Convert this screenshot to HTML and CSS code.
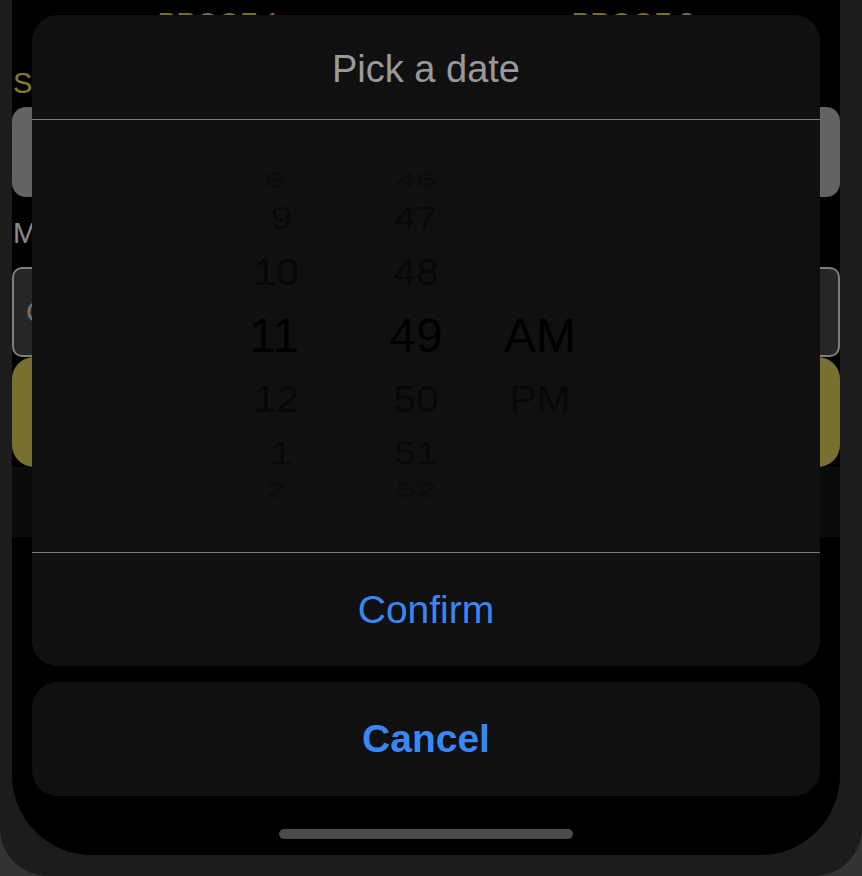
FILE: index.html
```html
<!DOCTYPE html>
<html>
<head>
    <title>Pick a date</title>
    <link rel="stylesheet" href="styles.css">
</head>
<body>
    <div class="device">
        <div class="screen">
            <!-- form behind the modal -->
            <div class="app">
                <div class="app-tabs">
                    <span class="app-tab">PROOF 1</span>
                    <span class="app-tab">PROOF 2</span>
                </div>
                <div class="app-label gold">Select date</div>
                <div class="app-btn"></div>
                <div class="app-label">Manufacturer</div>
                <div class="app-input">Choose one</div>
                <div class="app-submit"></div>
                <div class="app-footer"></div>
            </div>
            <div class="backdrop"></div>

            <div class="sheet">
                <div class="sheet-card">
                    <div class="sheet-title">Pick a date</div>
                    <div class="picker">
                        <div class="picker-band"></div>
                        <div class="picker-row r4"><span>7</span><span>45</span><span></span></div>
                        <div class="picker-row r3"><span>8</span><span>46</span><span></span></div>
                        <div class="picker-row r2"><span>9</span><span>47</span><span></span></div>
                        <div class="picker-row r1"><span>10</span><span>48</span><span></span></div>
                        <div class="picker-row r0"><span>11</span><span>49</span><span>AM</span></div>
                        <div class="picker-row r1 below"><span>12</span><span>50</span><span>PM</span></div>
                        <div class="picker-row r2 below"><span>1</span><span>51</span><span></span></div>
                        <div class="picker-row r3 below"><span>2</span><span>52</span><span></span></div>
                        <div class="picker-row r4 below"><span>3</span><span>53</span><span></span></div>
                    </div>
                    <button class="sheet-btn confirm">Confirm</button>
                </div>
                <button class="sheet-btn cancel">Cancel</button>
            </div>

            <div class="home-bar"></div>
        </div>
    </div>
</body>
</html>
```

FILE: styles.css
```css
* {
    box-sizing: border-box;
}
html, body {
    margin: 0;
    padding: 0;
}
body {
    background-color: #333;
    font-family: "Liberation Sans", Arial, sans-serif;
    overflow: hidden;
}

/* phone frame */
.device {
    width: 862px;
    height: 876px;
    padding: 0 22px 21px 12px;
    background-color: #1c1c1c;
    border-radius: 0 0 48px 48px;
}
.screen {
    position: relative;
    height: 855px;
    background-color: #000;
    border-radius: 0 0 80px 80px;
    overflow: hidden;
}

/* app content under the modal */
.app-tabs {
    display: flex;
    padding-top: 6px;
    font-size: 28px;
    line-height: 34px;
    color: #c8b843;
}
.app-tab {
    flex: 1;
    text-align: center;
}
.app-label {
    margin-top: 19px;
    padding-left: 1px;
    font-size: 29px;
    line-height: 34px;
    color: #e6e6e6;
}
.app-label.gold {
    margin-top: 26px;
    color: #dccb4c;
}
.app-btn {
    margin-top: 7px;
    height: 90px;
    background-color: #a5a5a5;
    border-radius: 14px;
}
.app-input {
    margin-top: 17px;
    height: 90px;
    padding: 0 12px;
    display: flex;
    align-items: center;
    font-size: 29px;
    color: #bdbdbd;
    background-color: #404040;
    border: 2px solid #d0d0d0;
    border-radius: 10px;
}
.app-submit {
    height: 110px;
    background-color: #c8bb50;
    border-radius: 22px;
}
.app-footer {
    height: 70px;
    background-color: #111316;
}
.backdrop {
    position: absolute;
    inset: 0;
    background-color: rgba(0, 0, 0, 0.4);
}

/* date picker sheet */
.sheet {
    position: absolute;
    inset: 0;
    display: flex;
    flex-direction: column;
    justify-content: flex-end;
    gap: 16px;
    padding: 0 20px 59px;
}
.sheet-card {
    background-color: #101010;
    border-radius: 26px;
    overflow: hidden;
}
.sheet-title {
    height: 105px;
    padding-top: 4px;
    display: flex;
    align-items: center;
    justify-content: center;
    font-size: 38px;
    color: #999;
    border-bottom: 1px solid #7b7b7b;
}
.picker {
    position: relative;
    height: 432px;
    padding-top: 28px;
    overflow: hidden;
}
.picker-band {
    position: absolute;
    left: 0;
    right: 0;
    top: 182px;
    height: 69px;
    border-top: 1px solid #0b0b0b;
    border-bottom: 1px solid #0b0b0b;
}
.picker-row {
    position: relative;
    display: flex;
    align-items: center;
    font-size: 41px;
    line-height: 1;
    color: #000;
}
/* hours | minutes | meridiem */
.picker-row span {
    display: block;
    text-align: center;
}
.picker-row span:nth-child(1) {
    width: 267px;
    text-align: right;
}
.picker-row span:nth-child(2) {
    width: 128px;
    margin-left: 53px;
}
.picker-row span:nth-child(3) {
    width: 120px;
}
.picker-row.r0 {
    height: 68px;
    font-size: 48px;
}
.picker-row.r1 { height: 60px; opacity: 0.55; }
.picker-row.r2 { height: 48px; opacity: 0.45; }
.picker-row.r3 { height: 28px; opacity: 0.3; }
.picker-row.r4 { height: 18px; opacity: 0.1; }
.picker-row.r1.below { height: 58px; }
.picker-row.r2.below { height: 50px; }
.picker-row.r3.below { height: 24px; }
.picker-row.r4.below { height: 22px; }

.picker-row.r1 span { transform: scaleY(0.92); }
.picker-row.r2 span { transform: scale(0.95, 0.78); }
.picker-row.r3 span { transform: scale(0.9, 0.5); }
.picker-row.r4 span { transform: scale(0.88, 0.28); }

.sheet-btn {
    display: block;
    width: 100%;
    height: 114px;
    padding: 0;
    font-family: inherit;
    font-size: 39px;
    color: #3a86f4;
    background-color: #101010;
    border: none;
}
.sheet-btn.confirm {
    border-top: 1px solid #7b7b7b;
}
.sheet-btn.cancel {
    font-weight: bold;
    border-radius: 26px;
}

.home-bar {
    position: absolute;
    bottom: 16px;
    left: 267px;
    width: 294px;
    height: 10px;
    background-color: #4a4a4a;
    border-radius: 5px;
}
```
